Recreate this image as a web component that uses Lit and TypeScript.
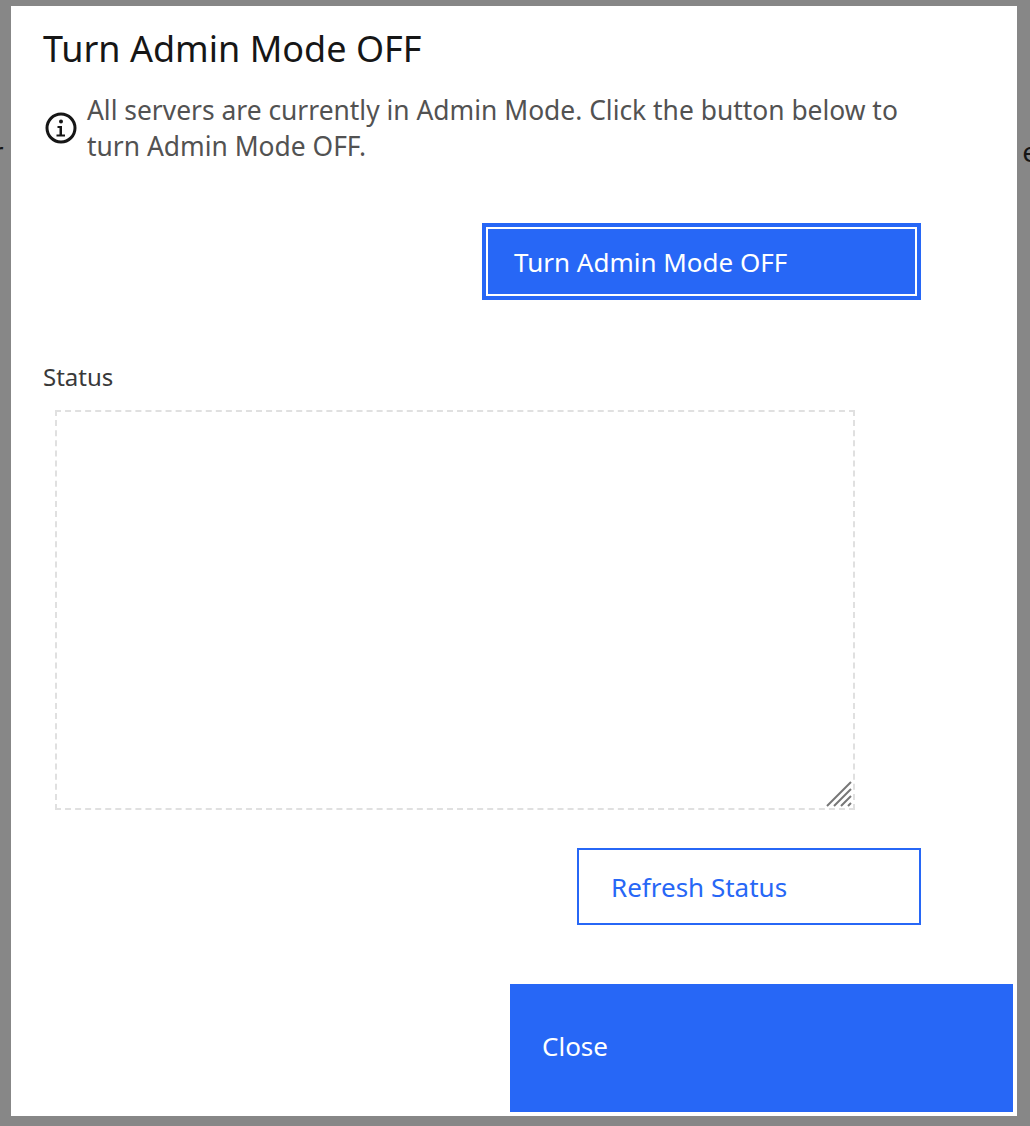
import { LitElement, html, css } from "lit";
import { customElement } from "lit/decorators.js";

@customElement("app-root")
export class AppRoot extends LitElement {
  static styles = css`
    :host {
      display: block;
      position: relative;
      width: 1030px;
      height: 1126px;
      overflow: hidden;
      background: #878787;
      font-family: "Noto Sans", sans-serif;
      color: #161616;
    }
    .behind {
      position: absolute;
      left: -8px;
      right: -8px;
      top: 133px;
      display: flex;
      justify-content: space-between;
      font-size: 28px;
      line-height: 36px;
      color: #161616;
    }
    .modal {
      position: absolute;
      left: 11px;
      top: 6px;
      width: 1006px;
      height: 1110px;
      box-sizing: border-box;
      background: #fff;
      display: flex;
      flex-direction: column;
      padding: 20px 4px 4px 0;
    }
    h2 {
      margin: 0 0 0 32px;
      font-size: 36px;
      line-height: 46px;
      font-weight: 400;
    }
    .notice {
      display: flex;
      align-items: center;
      gap: 9px;
      margin: 20px 0 0 33px;
      font-size: 26.4px;
      line-height: 36px;
      color: #525252;
    }
    .notice svg {
      flex: none;
    }
    .notice p {
      margin: 0;
      width: 840px;
    }
    .row {
      display: flex;
      justify-content: flex-end;
      padding-right: 92px;
    }
    .btn {
      box-sizing: border-box;
      height: 77px;
      padding: 0 32px;
      display: flex;
      align-items: center;
      font: inherit;
      font-size: 26px;
      text-align: left;
    }
    .primary {
      width: 439px;
      margin-top: 59px;
      padding-left: 28px;
      border: 4px solid #2767f6;
      background: #2767f6;
      color: #fff;
      box-shadow: inset 0 0 0 2px #fff;
    }
    .secondary {
      width: 344px;
      margin-top: 38px;
      border: 2px solid #2767f6;
      background: #fff;
      color: #2767f6;
    }
    label {
      margin: 59px 0 0 32px;
      font-size: 24px;
      line-height: 36px;
      color: #393939;
    }
    .area {
      position: relative;
      box-sizing: border-box;
      width: 800px;
      height: 400px;
      margin: 15px 0 0 44px;
      border: 2px dashed #e0e0e0;
    }
    .area svg {
      position: absolute;
      right: 1px;
      bottom: 1px;
    }
    .close {
      box-sizing: border-box;
      align-self: flex-end;
      width: 503px;
      height: 128px;
      margin-top: auto;
      padding: 0 32px 4px;
      border: 0;
      display: flex;
      align-items: center;
      background: #2767f6;
      color: #fff;
      font: inherit;
      font-size: 26px;
      text-align: left;
    }
  `;

  render() {
    return html`
      <div class="behind"><span>r</span><span>e</span></div>
      <div class="modal">
        <h2>Turn Admin Mode OFF</h2>
        <div class="notice">
          <svg width="34" height="34" viewBox="0 0 34 34">
            <circle cx="17" cy="17" r="14" fill="none" stroke="#161616" stroke-width="3"></circle>
            <circle cx="17" cy="10.5" r="2" fill="#161616"></circle>
            <path d="M13.5 15h4.5v8.5h3v2h-8.500v-2h3v-6.500h-2z" fill="#161616"></path>
          </svg>
          <p>All servers are currently in Admin Mode. Click the button below to turn Admin Mode OFF.</p>
        </div>
        <div class="row"><button class="btn primary">Turn Admin Mode OFF</button></div>
        <label>Status</label>
        <div class="area">
          <svg width="26" height="26" viewBox="0 0 26 26" stroke="#777" stroke-width="2" fill="none">
            <path d="M1 25 25 1M8 25 25 8M15 25 25 15M22 25 25 22"></path>
          </svg>
        </div>
        <div class="row"><button class="btn secondary">Refresh Status</button></div>
        <button class="close">Close</button>
      </div>
    `;
  }
}
